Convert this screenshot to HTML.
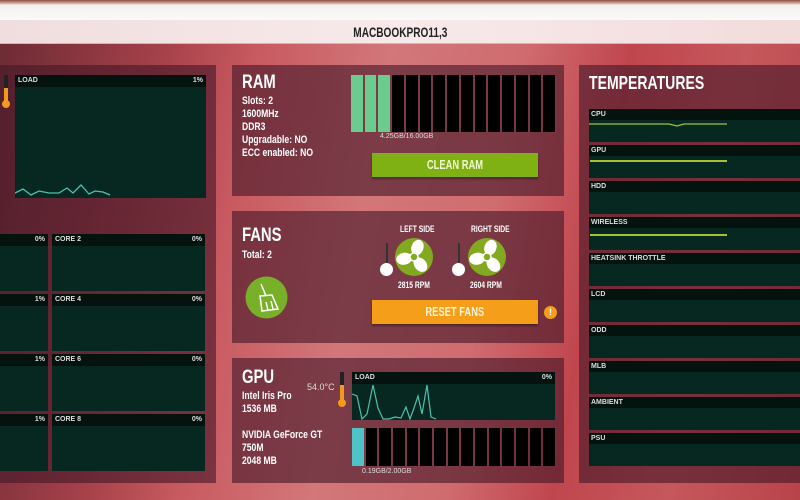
<!DOCTYPE html>
<html><head><meta charset="utf-8"><style>
*{margin:0;padding:0;box-sizing:border-box}
body{width:800px;height:500px;overflow:hidden;position:relative;font-family:"Liberation Sans Narrow","Liberation Sans",sans-serif;font-weight:bold;color:#fff;
background:linear-gradient(100deg,#6a2a33 0%,#a8424b 20%,#c85a60 30%,#d2777a 45%,#cf6c70 60%,#c0464e 72%,#c5585c 85%,#b8444a 100%)}
.top{position:absolute;left:0;top:0;width:800px;height:20px;background:linear-gradient(#8b5040 0,#c9a393 3px,#f4f0ee 5px,#fafafa 20px)}
.bar{position:absolute;left:0;top:20px;width:800px;height:24px;background:linear-gradient(90deg,#f0dede,#f8eaea 50%,#f2dcdc);border-bottom:1px solid #d4b4b4;color:#222;text-align:center;font-size:14px;line-height:24px}
.bar span{display:inline-block;transform:scaleX(.72)}
.p{position:absolute;background:rgba(70,25,40,.62)}
.g{position:absolute;background:#062820}
.g .h{height:12px;background:#05130f;font-size:7px;line-height:12px;padding:0 3px;color:#ddd;display:flex;justify-content:space-between}
.t{position:absolute;font-size:19px;transform:scaleX(.78);transform-origin:left}
.s{position:absolute;font-size:11px;line-height:13px;transform:scaleX(.78);transform-origin:left;white-space:nowrap}
.bars{position:absolute;display:flex;gap:2px}
.bars div{flex:1;background:#000}
.btn{position:absolute;text-align:center;font-size:13px;line-height:24px;box-shadow:0 2px 2px rgba(0,0,0,.35)}
.btn span{display:inline-block;transform:scaleX(.72)}
.tr{position:absolute;left:589px;width:211px;height:33px;background:#062820}
.tr .h{height:11px;background:#05130f;font-size:7px;line-height:11px;padding-left:2px;color:#ddd}
.lb{position:absolute;font-size:9px;transform:scaleX(.75);transform-origin:left;white-space:nowrap}
</style></head><body>
<div class="top"></div>
<div class="bar"><span>MACBOOKPRO11,3</span></div>

<div class="p" style="left:0;top:65px;width:216px;height:418px"></div>
<div style="position:absolute;left:4px;top:75px;width:4px;height:30px;background:#222"></div>
<div style="position:absolute;left:4px;top:88px;width:4px;height:16px;background:#f39a1c"></div>
<div style="position:absolute;left:2px;top:100px;width:8px;height:8px;border-radius:50%;background:#f39a1c"></div>
<div class="g" style="left:15px;top:75px;width:191px;height:123px"><div class="h"><span>LOAD</span><span>1%</span></div>
<svg width="191" height="111" style="position:absolute;left:0;top:12px"><polyline points="0,106 8,102 16,108 24,104 34,106 44,106 52,101 58,106 66,98 74,107 80,104 88,105 95,108" fill="none" stroke="#4fc0b0" stroke-width="1.3"/></svg></div>
<div class="g" style="left:0;top:234px;width:48px;height:57px"><div class="h"><span></span><span>0%</span></div></div>
<div class="g" style="left:52px;top:234px;width:153px;height:57px"><div class="h"><span>CORE 2</span><span>0%</span></div></div>
<div class="g" style="left:0;top:294px;width:48px;height:57px"><div class="h"><span></span><span>1%</span></div></div>
<div class="g" style="left:52px;top:294px;width:153px;height:57px"><div class="h"><span>CORE 4</span><span>0%</span></div></div>
<div class="g" style="left:0;top:354px;width:48px;height:57px"><div class="h"><span></span><span>1%</span></div></div>
<div class="g" style="left:52px;top:354px;width:153px;height:57px"><div class="h"><span>CORE 6</span><span>0%</span></div></div>
<div class="g" style="left:0;top:414px;width:48px;height:57px"><div class="h"><span></span><span>1%</span></div></div>
<div class="g" style="left:52px;top:414px;width:153px;height:57px"><div class="h"><span>CORE 8</span><span>0%</span></div></div>

<div class="p" style="left:232px;top:65px;width:332px;height:131px"></div>
<div class="t" style="left:242px;top:72px">RAM</div>
<div class="s" style="left:242px;top:95px">Slots: 2<br>1600MHz<br>DDR3<br>Upgradable: NO<br>ECC enabled: NO</div>
<div class="bars" style="left:351px;top:75px;width:204px;height:57px">
<div style="background:#6ccb8e"></div><div style="background:#6ccb8e"></div><div style="background:#6ccb8e"></div><div></div><div></div><div></div><div></div><div></div><div></div><div></div><div></div><div></div><div></div><div></div><div></div></div>
<div style="position:absolute;left:380px;top:133px;font-size:7px;font-weight:normal;color:#ddd;font-family:'Liberation Sans',sans-serif">4.25GB/16.00GB</div>
<div class="btn" style="left:372px;top:153px;width:166px;height:24px;background:#7fb114;color:#f0f8d0"><span>CLEAN RAM</span></div>

<div class="p" style="left:232px;top:211px;width:332px;height:132px"></div>
<div class="t" style="left:242px;top:225px">FANS</div>
<div class="s" style="left:242px;top:249px">Total: 2</div>
<svg style="position:absolute;left:245px;top:276px" width="43" height="43"><circle cx="21.5" cy="21.5" r="21" fill="#78b02a"/>
<g fill="none" stroke="#fff" stroke-width="1.5"><line x1="16" y1="8" x2="21" y2="20"/><path d="M15 20 L27 19 L33 33 L17 35 Z"/><line x1="21" y1="26" x2="23" y2="34"/><line x1="26" y1="25" x2="28" y2="33"/></g></svg>
<div class="lb" style="left:400px;top:224px">LEFT SIDE</div>
<div class="lb" style="left:471px;top:224px">RIGHT SIDE</div>
<div style="position:absolute;left:386px;top:243px;width:2px;height:30px;background:#333"></div>
<div style="position:absolute;left:380px;top:263px;width:13px;height:13px;border-radius:50%;background:#fff"></div>
<div style="position:absolute;left:458px;top:243px;width:2px;height:30px;background:#333"></div>
<div style="position:absolute;left:452px;top:263px;width:13px;height:13px;border-radius:50%;background:#fff"></div>
<svg style="position:absolute;left:395px;top:238px" width="38" height="38"><circle cx="19" cy="19" r="19" fill="#82a91f"/><g fill="#fff"><ellipse cx="19" cy="9" rx="6" ry="8" transform="rotate(20 19 19)"/><ellipse cx="19" cy="9" rx="6" ry="8" transform="rotate(140 19 19)"/><ellipse cx="19" cy="9" rx="6" ry="8" transform="rotate(260 19 19)"/></g><circle cx="19" cy="19" r="4" fill="#82a91f" stroke="#fff" stroke-width="1.5"/></svg>
<svg style="position:absolute;left:468px;top:238px" width="38" height="38"><circle cx="19" cy="19" r="19" fill="#82a91f"/><g fill="#fff"><ellipse cx="19" cy="9" rx="6" ry="8" transform="rotate(20 19 19)"/><ellipse cx="19" cy="9" rx="6" ry="8" transform="rotate(140 19 19)"/><ellipse cx="19" cy="9" rx="6" ry="8" transform="rotate(260 19 19)"/></g><circle cx="19" cy="19" r="4" fill="#82a91f" stroke="#fff" stroke-width="1.5"/></svg>
<div class="lb" style="left:398px;top:280px">2815 RPM</div>
<div class="lb" style="left:470px;top:280px">2604 RPM</div>
<div class="btn" style="left:372px;top:300px;width:166px;height:24px;background:#f59e1a;color:#fff3d0"><span>RESET FANS</span></div>
<div style="position:absolute;left:544px;top:306px;width:13px;height:13px;border-radius:50%;background:#f59e1a;font-size:9px;text-align:center;line-height:13px">!</div>

<div class="p" style="left:232px;top:358px;width:332px;height:125px"></div>
<div class="t" style="left:242px;top:367px">GPU</div>
<div class="s" style="left:242px;top:390px">Intel Iris Pro<br>1536 MB</div>
<div class="s" style="left:242px;top:429px">NVIDIA GeForce GT<br>750M<br>2048 MB</div>
<div style="position:absolute;left:307px;top:382px;font-size:9px;font-weight:normal;color:#ddd;font-family:'Liberation Sans',sans-serif">54.0°C</div>
<div style="position:absolute;left:340px;top:372px;width:4px;height:30px;background:#222"></div>
<div style="position:absolute;left:340px;top:385px;width:4px;height:17px;background:#f39a1c"></div>
<div style="position:absolute;left:338px;top:399px;width:8px;height:8px;border-radius:50%;background:#f39a1c"></div>
<div class="g" style="left:352px;top:372px;width:203px;height:48px"><div class="h"><span>LOAD</span><span>0%</span></div>
<svg width="203" height="36" style="position:absolute;left:0;top:12px"><polyline points="0,10 5,12 10,35 15,30 21,1 26,24 31,35 37,35 43,33 49,34 54,23 58,35 62,24 66,12 70,30 75,1 79,33 84,35" fill="none" stroke="#4fc0b0" stroke-width="1.2"/></svg></div>
<div class="bars" style="left:352px;top:428px;width:203px;height:38px">
<div style="background:#4fc4c8"></div><div></div><div></div><div></div><div></div><div></div><div></div><div></div><div></div><div></div><div></div><div></div><div></div><div></div><div></div></div>
<div style="position:absolute;left:362px;top:468px;font-size:7px;font-weight:normal;color:#ddd;font-family:'Liberation Sans',sans-serif">0.19GB/2.00GB</div>

<div class="p" style="left:579px;top:65px;width:221px;height:418px"></div>
<div class="t" style="left:589px;top:73px;font-size:18px">TEMPERATURES</div>
<div class="tr" style="top:109px"><div class="h">CPU</div><svg width="211" height="22" style="position:absolute;left:0;top:11px"><polyline points="0,4 80,4 88,6 95,4 138,4" fill="none" stroke="#a5c030" stroke-width="1.3"/></svg></div>
<div class="tr" style="top:145px"><div class="h">GPU</div><div style="position:absolute;left:1px;top:15px;width:137px;height:1.5px;background:#a5c030"></div></div>
<div class="tr" style="top:181px"><div class="h">HDD</div></div>
<div class="tr" style="top:217px"><div class="h">WIRELESS</div><div style="position:absolute;left:1px;top:17px;width:137px;height:1.5px;background:#a5c030"></div></div>
<div class="tr" style="top:253px"><div class="h">HEATSINK THROTTLE</div></div>
<div class="tr" style="top:289px"><div class="h">LCD</div></div>
<div class="tr" style="top:325px"><div class="h">ODD</div></div>
<div class="tr" style="top:361px"><div class="h">MLB</div></div>
<div class="tr" style="top:397px"><div class="h">AMBIENT</div></div>
<div class="tr" style="top:433px"><div class="h">PSU</div></div>
</body></html>
